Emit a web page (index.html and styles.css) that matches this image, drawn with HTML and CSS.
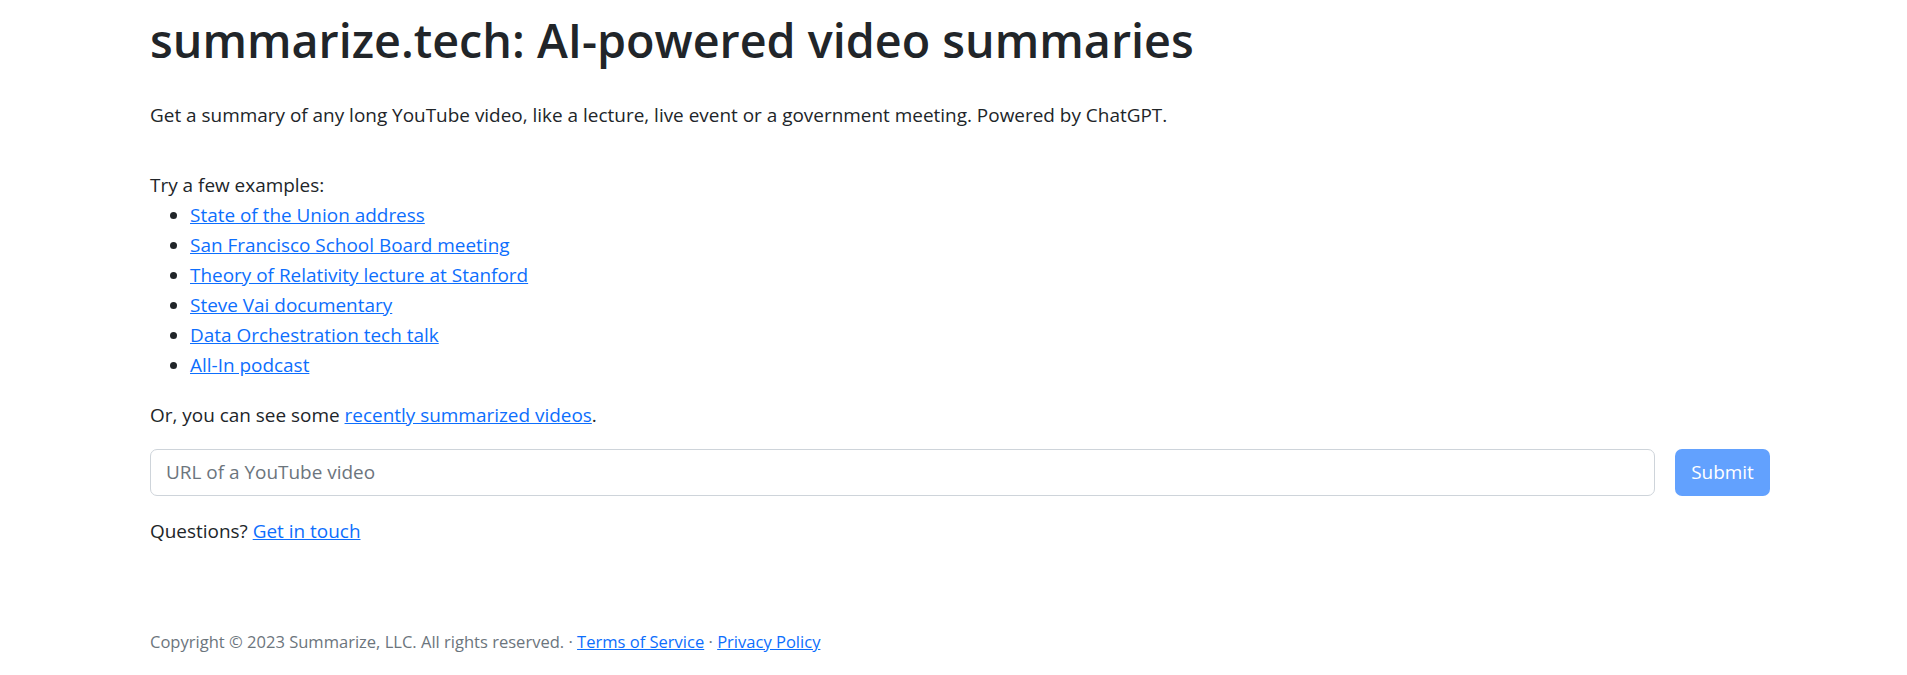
FILE: index.html
```html
<!DOCTYPE html>
<html lang="en">
<head>
<meta charset="utf-8">
<title>summarize.tech: AI-powered video summaries</title>
<link rel="stylesheet" href="styles.css">
</head>
<body>
<main class="page">
  <h1 class="title">summarize.tech: AI-powered video summaries</h1>
  <p class="lead">Get a summary of any long YouTube video, like a lecture, live event or a government meeting. Powered by ChatGPT.</p>
  <p class="examples-label">Try a few examples:</p>
  <ul class="examples">
    <li><a href="#">State of the Union address</a></li>
    <li><a href="#">San Francisco School Board meeting</a></li>
    <li><a href="#">Theory of Relativity lecture at Stanford</a></li>
    <li><a href="#">Steve Vai documentary</a></li>
    <li><a href="#">Data Orchestration tech talk</a></li>
    <li><a href="#">All-In podcast</a></li>
  </ul>
  <p class="recent">Or, you can see some <a href="#">recently summarized videos</a>.</p>
  <form class="url-form">
    <input class="url-input" type="text" placeholder="URL of a YouTube video">
    <button class="submit-btn" type="submit" disabled>Submit</button>
  </form>
  <p class="questions">Questions? <a href="#">Get in touch</a></p>
  <footer class="footer">Copyright © 2023 Summarize, LLC. All rights reserved. · <a href="#">Terms of Service</a> · <a href="#">Privacy Policy</a></footer>
</main>
</body>
</html>
```
FILE: styles.css
```css
html, body {
  margin: 0;
  padding: 0;
  background: #fff;
}
body {
  font-family: "Open Sans", "Noto Sans", sans-serif;
  font-size: 18.95px;
  line-height: 30px;
  color: #212529;
}
a {
  color: #0d6efd;
  text-decoration: underline;
}
.page {
  padding: 12px 137px 0 150px;
}
.title {
  margin: 0 0 30px;
  font-size: 46.7px;
  line-height: 57.6px;
  font-weight: 600;
  letter-spacing: 0;
}
.lead {
  margin: 0 0 40px;
}
.examples-label {
  margin: 0;
}
.examples {
  margin: 0 0 20px;
  padding-left: 40px;
}
.recent {
  margin: 0 0 19px;
}
.url-form {
  display: flex;
  gap: 20px;
  margin: 0 0 20px;
}
.url-input {
  flex: 1;
  box-sizing: border-box;
  height: 47px;
  padding: 0 15px;
  border: 1px solid #ced4da;
  border-radius: 7px;
  font-family: inherit;
  font-size: 18.95px;
  color: #212529;
  background: #fff;
}
.url-input::placeholder {
  color: #6c757d;
  opacity: 1;
}
.submit-btn {
  box-sizing: border-box;
  height: 47px;
  width: 95px;
  padding: 0;
  border: 0;
  border-radius: 7px;
  background: rgb(98, 161, 254);
  color: #fff;
  font-family: inherit;
  font-size: 18.95px;
}
.questions {
  margin: 0 0 83px;
}
.footer {
  font-size: 16.55px;
  line-height: 25px;
  color: #6c757d;
}
```
